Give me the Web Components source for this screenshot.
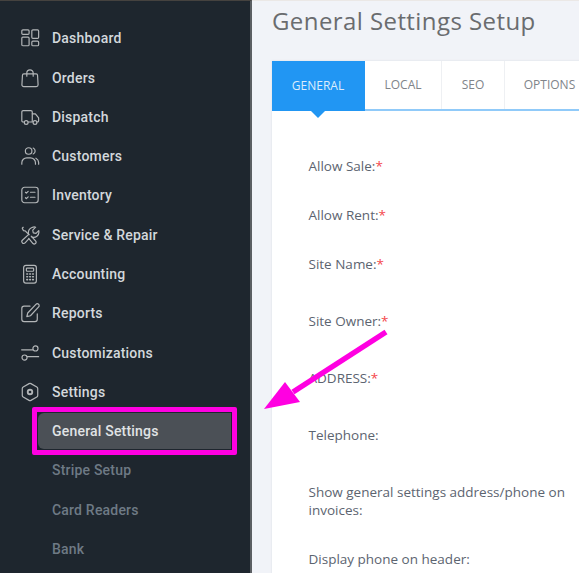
<!DOCTYPE html>
<html>
<head>
<meta charset="utf-8">
<title>General Settings Setup</title>
<style>
  html, body { margin: 0; height: 100%; overflow: hidden; background: #f1f3f8; }
  app-shell { width: 579px; height: 573px; }
</style>
</head>
<body>
<app-shell>
  <side-bar slot="side">
    <nav-item icon="dashboard">Dashboard</nav-item>
    <nav-item icon="bag">Orders</nav-item>
    <nav-item icon="truck">Dispatch</nav-item>
    <nav-item icon="users">Customers</nav-item>
    <nav-item icon="list">Inventory</nav-item>
    <nav-item icon="tools">Service &amp; Repair</nav-item>
    <nav-item icon="calc">Accounting</nav-item>
    <nav-item icon="edit">Reports</nav-item>
    <nav-item icon="toggle">Customizations</nav-item>
    <nav-item icon="gear">Settings</nav-item>
    <nav-item sub active>General Settings</nav-item>
    <nav-item sub>Stripe Setup</nav-item>
    <nav-item sub>Card Readers</nav-item>
    <nav-item sub>Bank</nav-item>
  </side-bar>
  <settings-page slot="main">
    <form-row required style="--h:49px">Allow Sale:</form-row>
    <form-row required style="--h:49px">Allow Rent:</form-row>
    <form-row required style="--h:57px">Site Name:</form-row>
    <form-row required style="--h:57px">Site Owner:</form-row>
    <form-row required style="--h:57px">ADDRESS:</form-row>
    <form-row style="--h:57px">Telephone:</form-row>
    <form-row style="--h:67px">Show general settings address/phone on invoices:</form-row>
    <form-row style="--h:40px">Display phone on header:</form-row>
  </settings-page>
  <call-out></call-out>
</app-shell>

<script>
const ICONS = {
  dashboard: '<rect x="2" y="2" width="8" height="5" rx="1.2"/><rect x="2" y="10" width="8" height="9.500" rx="1.2"/><rect x="13" y="2" width="7.500" height="9.500" rx="1.2"/><rect x="13" y="14.500" width="7.500" height="5" rx="1.2"/>',
  bag: '<path d="M4.200 6.500h13.600a1.500 1.500 0 0 1 1.500 1.400l.6 10.600a2 2 0 0 1-2 2H4.100a2 2 0 0 1-2-2l.6-10.600a1.500 1.500 0 0 1 1.500-1.400z"/><path d="M7.500 9V5.500a3.500 3.500 0 0 1 7 0V9"/>',
  truck: '<path d="M4.500 16.500H3.500A1.500 1.500 0 0 1 2 15V5.500A1.500 1.500 0 0 1 3.500 4H12a1.500 1.500 0 0 1 1.500 1.500v11h-4.500"/><path d="M13.500 7.500h3.400l3.600 4.500v3a1.500 1.500 0 0 1-1.500 1.500h-.2"/><circle cx="6.800" cy="17" r="2.100"/><circle cx="16.500" cy="17" r="2.100"/>',
  users: '<circle cx="9.500" cy="5.500" r="3.600"/><path d="M2 20v-1.500A5.500 5.500 0 0 1 7.500 13h4a5.500 5.500 0 0 1 5.500 5.500V20"/><path d="M14.500 2.200a3.600 3.600 0 0 1 0 6.600"/><path d="M17.500 13.400A5.500 5.500 0 0 1 20.500 18v2"/>',
  list: '<rect x="2" y="2.500" width="18" height="17" rx="3"/><path d="M11.500 8h5M11.500 13.500h5"/><path d="M6 8l1 1 2-2M6 14l1 1 2-2"/>',
  tools: '<path d="M3.500 2.500L2.500 3.500l1.200 2.600 2 .3 4.300 4.300"/><path d="M12.300 12.200l5 5.600a2 2 0 0 1-3 2.600l-4.700-5.700"/><path d="M9.600 15.300l-4 4.400a2 2 0 0 1-3-.1 2 2 0 0 1 0-2.800l7-6.500c-.8-2.600.2-6 3.600-7.600 1.400-.6 3-.7 4-.3l-3.200 3.200.6 3 3 .6 3-3.100c.6 2.400-.2 4.700-2 6.200-1.600 1.300-3.600 1.600-5.300 1"/>',
  calc: '<rect x="4" y="1.500" width="14" height="19.500" rx="2.500"/><rect x="7" y="4.500" width="8" height="3.500" rx=".8"/><path d="M7.500 11h.8M10.700 11h.8M13.900 11h.8M7.500 14h.8M10.700 14h.8M13.900 14h.8M7.500 17.200h.8M10.700 17.200h.8M13.900 17.200h.8" stroke-width="1.700"/>',
  edit: '<path d="M11 3.500H4.500a2.500 2.500 0 0 0-2.500 2.500v12a2.500 2.500 0 0 0 2.500 2.500h12a2.500 2.500 0 0 0 2.500-2.500v-6"/><path d="M17.500 1.500a2 2 0 0 1 3 2.800L11.500 14l-4 1 1-4z"/>',
  toggle: '<circle cx="17" cy="6" r="2.800"/><circle cx="5" cy="16" r="2.800"/><path d="M1.800 7.500H14M8 15h12.500"/>',
  gear: '<path d="M10 1.800a2 2 0 0 1 2 0l6.500 3.700a2 2 0 0 1 1 1.700v7.600a2 2 0 0 1-1 1.700L12 20.200a2 2 0 0 1-2 0l-6.500-3.700a2 2 0 0 1-1-1.700V7.200a2 2 0 0 1 1-1.700z"/><circle cx="11" cy="11" r="2.500" stroke-width="2"/>'
};

class AppShell extends HTMLElement {
  constructor() {
    super();
    this.attachShadow({ mode: "open" });
    this.shadowRoot.innerHTML = `
      <style>
        :host {
          display: flex;
          position: relative;
          overflow: hidden;
        }
      </style>
      <slot name="side"></slot>
      <slot name="main"></slot>
      <slot></slot>
    `;
  }
}

class SideBar extends HTMLElement {
  constructor() {
    super();
    this.attachShadow({ mode: "open" });
    this.shadowRoot.innerHTML = `
      <style>
        :host {
          display: block;
          box-sizing: border-box;
          width: 252px;
          height: 573px;
          flex: none;
          padding-top: 17.800px;
          background: #1e262e;
          border-top: 1px solid #45423f;
          border-right: 2px solid #5b5f63;
          font: 500 14px "Roboto", "Liberation Sans", sans-serif;
          letter-spacing: .2px;
        }
      </style>
      <slot></slot>
    `;
  }
}

class NavItem extends HTMLElement {
  constructor() {
    super();
    this.attachShadow({ mode: "open" });
  }

  connectedCallback() {
    const icon = ICONS[this.getAttribute("icon")];
    this.shadowRoot.innerHTML = `
      <style>
        :host {
          display: flex;
          align-items: center;
          height: 39.270px;
          padding: 0 0 0 20px;
          color: #d3d8dc;
        }
        :host([sub]) {
          color: #6e7a85;
        }
        :host([active]) {
          color: #e0e3e5;
        }
        svg {
          width: 20px;
          height: 20px;
          flex: none;
          margin-right: 12px;
          fill: none;
          stroke: #b3b6b8;
          stroke-width: 1.300;
          stroke-linecap: round;
          stroke-linejoin: round;
        }
        .label {
          flex: 1;
          margin-right: 19px;
          line-height: 36px;
          border-radius: 6px 0 0 6px;
        }
        :host([sub]) .label {
          margin-left: 18px;
          padding-left: 14px;
        }
        :host([active]) .label {
          background: #4b5056;
        }
      </style>
      ${icon ? `<svg viewBox="0 0 22 22">${icon}</svg>` : ""}
      <span class="label"><slot></slot></span>
    `;
  }
}

class SettingsPage extends HTMLElement {
  constructor() {
    super();
    this.attachShadow({ mode: "open" });
    this.shadowRoot.innerHTML = `
      <style>
        :host {
          display: block;
          flex: 1;
          min-width: 0;
          padding-left: 20px;
          background: #f1f3f8;
          font-family: "Open Sans", "Liberation Sans", sans-serif;
          border-top: 1px solid #ebe8e6;
        }
        h1 {
          margin: 0;
          height: 60px;
          box-sizing: border-box;
          padding-top: 2px;
          font-size: 24px;
          line-height: 35px;
          font-weight: 400;
          letter-spacing: .42px;
          color: #6a6c6f;
          white-space: nowrap;
        }
        .card {
          background: #fff;
          width: 340px;
          height: 520px;
          box-shadow: 0 0 2px #d8dbe2;
        }
        .tabs {
          display: flex;
          height: 50px;
          box-sizing: border-box;
          border-bottom: 2px solid #90caf9;
          font-size: 12px;
          color: #80848a;
        }
        .tab {
          display: flex;
          align-items: center;
          justify-content: center;
          height: 48px;
          padding-bottom: 2px;
          box-sizing: border-box;
          border-right: 1px solid #eef0f3;
        }
        .tab.on {
          position: relative;
          width: 93px;
          height: 50px;
          padding-right: 1px;
          background: #2196f3;
          color: #dcedfc;
          border: 0;
        }
        .tab.on::after {
          content: "";
          position: absolute;
          top: 50px;
          left: 39px;
          border: 7.500px solid transparent;
          border-top-color: #2196f3;
          border-bottom: 0;
        }
        .form {
          padding: 46px 0 0 36.500px;
        }
      </style>
      <h1>General Settings Setup</h1>
      <div class="card">
        <div class="tabs">
          <div class="tab on">GENERAL</div>
          <div class="tab" style="width:77px">LOCAL</div>
          <div class="tab" style="width:63px">SEO</div>
          <div class="tab" style="width:90px">OPTIONS</div>
        </div>
        <div class="form"><slot></slot></div>
      </div>
    `;
  }
}

class FormRow extends HTMLElement {
  constructor() {
    super();
    this.attachShadow({ mode: "open" });
  }

  connectedCallback() {
    this.shadowRoot.innerHTML = `
      <style>
        :host {
          display: block;
          height: var(--h);
          width: 262px;
          font-size: 13.500px;
          line-height: 18px;
          color: #5c6470;
        }
        b {
          font-weight: 400;
          color: #f4474c;
        }
      </style>
      <slot></slot>${this.hasAttribute("required") ? "<b>*</b>" : ""}
    `;
  }
}

class CallOut extends HTMLElement {
  constructor() {
    super();
    this.attachShadow({ mode: "open" });
    this.shadowRoot.innerHTML = `
      <style>
        :host {
          position: absolute;
          inset: 0;
          pointer-events: none;
        }
        .box {
          position: absolute;
          left: 32px;
          top: 407px;
          width: 205px;
          height: 48px;
          box-sizing: border-box;
          border: 5.500px solid #ff00e1;
          border-radius: 2px;
        }
        svg {
          position: absolute;
          inset: 0;
        }
      </style>
      <div class="box"></div>
      <svg width="579" height="573" viewBox="0 0 579 573">
        <path d="M386 332L293 392" stroke="#ff00e1" stroke-width="5.500" fill="none"/>
        <path d="M264 409L285 382L300 402z" fill="#ff00e1"/>
      </svg>
    `;
  }
}

customElements.define("app-shell", AppShell);
customElements.define("side-bar", SideBar);
customElements.define("nav-item", NavItem);
customElements.define("settings-page", SettingsPage);
customElements.define("form-row", FormRow);
customElements.define("call-out", CallOut);
</script>
</body>
</html>
